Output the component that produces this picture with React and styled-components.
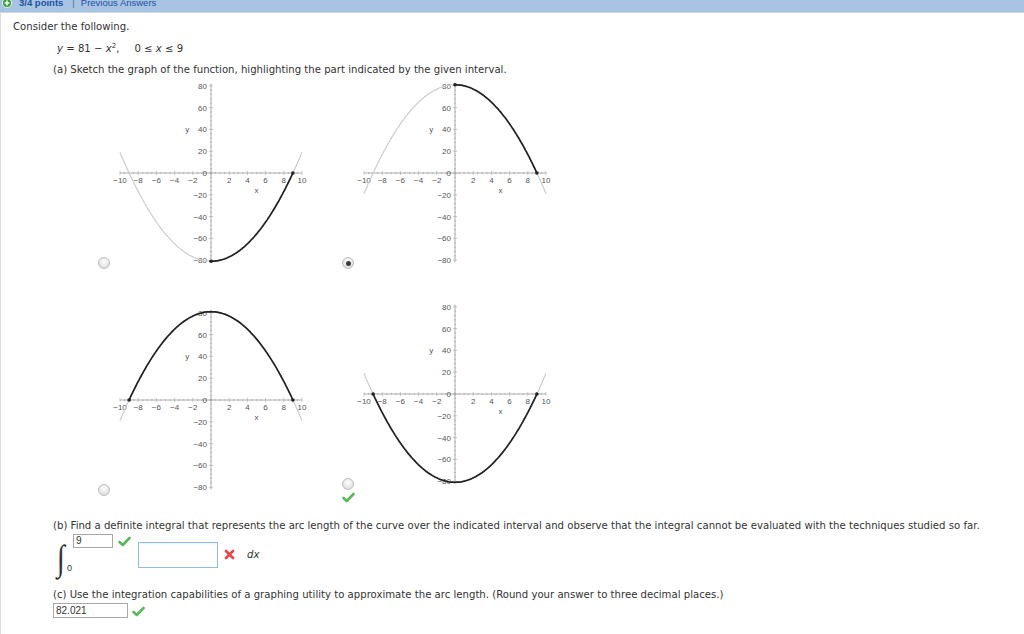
import { createGlobalStyle, styled } from "styled-components";

const GlobalStyle = createGlobalStyle`
  html, body {
    margin: 0;
    padding: 0;
    background: #ffffff;
  }
  body {
    font-family: "DejaVu Sans", Verdana, sans-serif;
    font-size: 10.15px;
    color: #333333;
  }
`

const OX = 100
const OY = 95
const SX = 9.1
const SY = 1.09
const px = x => OX + x * SX
const py = y => OY - y * SY
const up = x => x * x - 81
const down = x => 81 - x * x

function curve(f, a, b) {
    const n = 80
    const pts = []
    for (let i = 0; i <= n; i++) {
        const x = a + (b - a) * i / n
        pts.push(`${px(x).toFixed(1)},${py(f(x)).toFixed(1)}`)
    }
    return 'M' + pts.join('L')
}

const label = v => (v < 0 ? `\u2212${-v}` : `${v}`)

const xMinor = []
for (let i = -20; i <= 20; i++) xMinor.push(i / 2)
const yMinor = []
for (let v = -80; v <= 80; v += 4) yMinor.push(v)

function Graph({ f, from, to }) {
    return (
        <GraphSvg width="200" height="192" viewBox="0 0 200 192">
            <g stroke="#b4b4b4" strokeWidth="0.7">
                {xMinor.map(x => {
                    const len = x % 2 === 0 ? 2.2 : 1.1
                    return <line key={'x' + x} x1={px(x)} x2={px(x)} y1={OY - len} y2={OY + len} />
                })}
                {yMinor.map(v => {
                    const len = v % 20 === 0 ? 2.2 : 1.1
                    return <line key={'y' + v} x1={OX - len} x2={OX + len} y1={py(v)} y2={py(v)} />
                })}
            </g>
            <g stroke="#9a9a9a" strokeWidth="0.8">
                <line x1={px(-10)} y1={OY} x2={px(10)} y2={OY} />
                <line x1={OX} y1={py(82)} x2={OX} y2={py(-82)} />
            </g>
            <g fill="#555555" fontSize="8" fontFamily="'Liberation Sans', Arial, sans-serif">
                {[-10, -8, -6, -4, -2, 2, 4, 6, 8, 10].map(v => (
                    <text key={'lx' + v} x={px(v)} y={OY + 10} textAnchor="middle">{label(v)}</text>
                ))}
                {[80, 60, 40, 20, 0, -20, -40, -60, -80].map(v => (
                    <text key={'ly' + v} x={OX - 4} y={py(v) + 3} textAnchor="end">{label(v)}</text>
                ))}
                <text x={px(5)} y={OY + 20} textAnchor="middle">x</text>
                <text x={px(-2.6)} y={py(40) + 3} textAnchor="middle">y</text>
            </g>
            <path d={curve(f, -10, 10)} fill="none" stroke="#cdcdcd" strokeWidth="1.2" />
            <path d={curve(f, from, to)} fill="none" stroke="#222222" strokeWidth="1.7" />
            <circle cx={px(from)} cy={py(f(from))} r="1.8" fill="#222222" />
            <circle cx={px(to)} cy={py(f(to))} r="1.8" fill="#222222" />
        </GraphSvg>
    )
}

function CheckMark() {
    return (
        <CheckSvg width="13" height="11" viewBox="0 0 13 11">
            <path d="M1.5 6 L4.8 9 L11.5 2" fill="none" stroke="#5cb85c" strokeWidth="2.6" strokeLinecap="round" strokeLinejoin="round" />
        </CheckSvg>
    )
}

function CrossMark() {
    return (
        <CrossSvg width="11" height="11" viewBox="0 0 11 11">
            <path d="M2 2 L9 9 M9 2 L2 9" fill="none" stroke="#e2474c" strokeWidth="2.8" strokeLinecap="round" />
        </CrossSvg>
    )
}

function PlusIcon() {
    return (
        <PlusSvg width="10" height="10" viewBox="0 0 10 10">
            <circle cx="5" cy="5" r="4.6" fill="#3f9e3f" stroke="#ffffff" strokeWidth="0.8" />
            <path d="M5 2.6 V7.4 M2.6 5 H7.4" stroke="#ffffff" strokeWidth="1.5" />
        </PlusSvg>
    )
}

const options = [
    { f: up, from: 0, to: 9 },
    { f: down, from: 0, to: 9, checked: true },
    { f: down, from: -9, to: 9 },
    { f: up, from: -9, to: 9, correct: true },
]

export default function App() {
    return (
        <Page>
            <GlobalStyle />
            <TopBar>
                <PlusIcon />
                <Points>3/4 points</Points>
                <Sep>|</Sep>
                <PrevLink>Previous Answers</PrevLink>
            </TopBar>
            <Content>
                <Intro>Consider the following.</Intro>
                <Body>
                    <Equation>
                        <i>y</i> = 81 − <i>x</i><sup>2</sup>,
                        <Interval>0 ≤ <i>x</i> ≤ 9</Interval>
                    </Equation>
                    <Part>(a) Sketch the graph of the function, highlighting the part indicated by the given interval.</Part>
                    <Options>
                        {options.map((o, i) => (
                            <Option key={i}>
                                <OptionRow>
                                    <Radio $checked={o.checked} />
                                    <Graph f={o.f} from={o.from} to={o.to} />
                                </OptionRow>
                                {o.correct && <CheckMark />}
                            </Option>
                        ))}
                    </Options>
                    <Part>(b) Find a definite integral that represents the arc length of the curve over the indicated interval and observe that the integral cannot be evaluated with the techniques studied so far.</Part>
                    <IntegralRow>
                        <Sign><span>∫</span></Sign>
                        <Limits>
                            <UpperLimit>
                                <LimitBox>9</LimitBox>
                                <CheckMark />
                            </UpperLimit>
                            <LowerLimit>0</LowerLimit>
                        </Limits>
                        <BigInput />
                        <CrossMark />
                        <Dx>dx</Dx>
                    </IntegralRow>
                    <Part $top={13}>(c) Use the integration capabilities of a graphing utility to approximate the arc length. (Round your answer to three decimal places.)</Part>
                    <AnswerRow>
                        <AnswerBox>82.021</AnswerBox>
                        <CheckMark />
                    </AnswerRow>
                </Body>
            </Content>
        </Page>
    )
}

const Page = styled.div`
    width: 1024px;
    min-height: 634px;
    overflow: hidden;
`

const TopBar = styled.div`
    height: 12px;
    display: flex;
    align-items: flex-start;
    background: #a7c4e3;
    border-bottom: 1px solid #c9d7e6;
    overflow: hidden;
    font-family: "Liberation Sans", Arial, sans-serif;
    font-size: 9.5px;
    line-height: 9px;
    color: #2450a5;
    padding-left: 2px;
`

const PlusSvg = styled.svg`
    margin-top: -2px;
    margin-right: 7px;
`

const Points = styled.span`
    font-weight: bold;
    margin-top: -2px;
`

const Sep = styled.span`
    color: #5a6f8c;
    margin: -2px 6px 0 9px;
`

const PrevLink = styled.span`
    margin-top: -2px;
`

const Content = styled.div`
    border-left: 1px solid #dddddd;
    padding: 7px 0 0 12px;
    min-height: 614px;
`

const Intro = styled.div`
    line-height: 14px;
`

const Body = styled.div`
    margin-left: 40px;
`

const Equation = styled.div`
    margin-top: 8px;
    margin-left: 4px;
    line-height: 14px;
    sup {
        font-size: 7px;
        line-height: 0;
    }
`

const Interval = styled.span`
    margin-left: 15px;
`

const Part = styled.div`
    margin-top: ${p => p.$top ?? 7}px;
    line-height: 14px;
    white-space: nowrap;
`

const Options = styled.div`
    margin: 1px 0 0 45px;
    display: grid;
    grid-template-columns: 244px 244px;
    row-gap: 29px;
    align-items: center;
    & + div {
        margin-top: 16px;
    }
`

const Option = styled.div`
    display: flex;
    flex-direction: column;
`

const OptionRow = styled.div`
    display: flex;
    align-items: flex-end;
`

const Radio = styled.span`
    flex: none;
    box-sizing: border-box;
    width: 12px;
    height: 12px;
    margin: 0 1px 1px 0;
    border-radius: 50%;
    border: 1px solid #bdbdbd;
    background: radial-gradient(circle at 50% 35%, #ffffff 0%, #e8e8e8 55%, #d3d3d3 100%);
    display: flex;
    align-items: center;
    justify-content: center;
    &::after {
        content: "";
        width: 5px;
        height: 5px;
        border-radius: 50%;
        background: #3a3a3a;
        display: ${p => (p.$checked ? 'block' : 'none')};
    }
`

const GraphSvg = styled.svg`
    display: block;
    flex: none;
`

const CheckSvg = styled.svg`
    display: block;
    flex: none;
    margin-top: 1px;
`

const CrossSvg = styled.svg`
    display: block;
    flex: none;
    margin-left: 6px;
`

const IntegralRow = styled.div`
    margin-top: 1px;
    height: 41px;
    display: flex;
    align-items: center;
`

const Sign = styled.div`
    flex: none;
    width: 14px;
    align-self: flex-end;
    margin: 0 0 -3px 4px;
    font-family: "Liberation Serif", "DejaVu Serif", serif;
    font-size: 36px;
    line-height: 40px;
    color: #333333;
    span {
        display: inline-block;
        transform: scaleX(0.8);
        transform-origin: left center;
    }
`

const Limits = styled.div`
    align-self: stretch;
    display: flex;
    flex-direction: column;
    justify-content: space-between;
    margin-left: 2px;
`

const UpperLimit = styled.div`
    display: flex;
    align-items: center;
    gap: 5px;
`

const LimitBox = styled.div`
    box-sizing: border-box;
    width: 40px;
    height: 14px;
    border: 1px solid #a8a8a8;
    font-family: "Liberation Sans", Arial, sans-serif;
    font-size: 10px;
    line-height: 12px;
    padding-left: 2px;
    color: #333333;
`

const LowerLimit = styled.span`
    font-family: "Liberation Sans", Arial, sans-serif;
    font-size: 9px;
    line-height: 10px;
    margin: 0 0 2px -6px;
`

const BigInput = styled.div`
    box-sizing: border-box;
    width: 80px;
    height: 26px;
    margin-left: 7px;
    border: 1px solid #93bde6;
    box-shadow: inset 0 1px 2px rgba(0, 0, 0, 0.08);
    background: #ffffff;
`

const Dx = styled.i`
    margin-left: 12px;
`

const AnswerRow = styled.div`
    margin-top: 1px;
    display: flex;
    align-items: center;
    gap: 4px;
`

const AnswerBox = styled.div`
    box-sizing: border-box;
    width: 75px;
    height: 15px;
    border: 1px solid #a8a8a8;
    font-family: "Liberation Sans", Arial, sans-serif;
    font-size: 10px;
    line-height: 13px;
    padding-left: 2px;
    color: #333333;
`
